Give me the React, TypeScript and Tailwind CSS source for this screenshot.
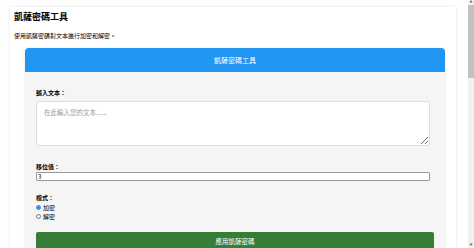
import React, { useState } from 'react';

const font = { fontFamily: '"Noto Sans CJK TC", "Noto Sans", sans-serif' };

export default function App() {
  const [mode, setMode] = useState('encrypt');
  const [shift, setShift] = useState('3');
  const [text, setText] = useState('');

  return (
    <div className="flex h-[248px] w-[474px] overflow-hidden bg-white text-black" style={font}>
      {/* page */}
      <div className="ml-[10px] mt-[7px] w-[446px] shrink-0 bg-white shadow-[0_0_3px_rgba(0,0,0,0.12)] px-[4px]">
        <h1 className="mt-[4px] text-[9px] font-bold leading-[12px]">凱薩密碼工具</h1>
        <p className="mt-[9px] text-[6px] leading-[8px]">使用凱薩密碼對文本進行加密和解密。</p>

        <div className="ml-[11px] mt-[8px] w-[420px] rounded-t-[4px] bg-[#f5f5f5] shadow-[0_0_2px_rgba(0,0,0,0.15)]">
          <div className="flex h-[24px] items-center justify-center rounded-t-[4px] bg-[#2196f3] text-[7px] text-white">
            凱薩密碼工具
          </div>
          <div className="px-[11px] pt-[17px] pb-[10px]">
            <label className="block text-[6px] font-bold leading-[8px]">輸入文本：</label>
            <textarea
              value={text}
              onChange={(e) => setText(e.target.value)}
              placeholder="在此輸入您的文本......"
              className="mt-[4px] block h-[45px] w-[394px] resize-y rounded-[3px] border border-[#dcdcdc] bg-white px-[7px] py-[6px] text-[6.5px] leading-[9px] outline-none placeholder:text-[#9a9a9a]"
            />

            <label className="mt-[17px] block text-[6px] font-bold leading-[8px]">移位值：</label>
            <input
              value={shift}
              onChange={(e) => setShift(e.target.value)}
              className="mt-[1px] block h-[9px] w-[394px] rounded-[1px] border border-[#9a9a9a] bg-white px-[1px] text-[6px] leading-[7px] outline-none"
            />

            <label className="mt-[13px] block text-[6px] font-bold leading-[8px]">模式：</label>
            <div className="mt-[1px] flex flex-col text-[6px] leading-[9px]">
              <label className="flex items-center gap-[2px]">
                <input
                  type="radio"
                  name="mode"
                  checked={mode === 'encrypt'}
                  onChange={() => setMode('encrypt')}
                  className="m-0 h-[5px] w-[5px] accent-[#2680eb]"
                />
                加密
              </label>
              <label className="flex items-center gap-[2px]">
                <input
                  type="radio"
                  name="mode"
                  checked={mode === 'decrypt'}
                  onChange={() => setMode('decrypt')}
                  className="m-0 h-[5px] w-[5px] accent-[#2680eb]"
                />
                解密
              </label>
            </div>

            <button className="mt-[11px] flex h-[18px] w-[398px] items-center justify-center rounded-[2px] bg-[#377d37] text-[6.5px] leading-[8px] text-white">
              應用凱薩密碼
            </button>
          </div>
        </div>
      </div>

      {/* scrollbar */}
      <div className="ml-auto flex h-full w-[6px] flex-col bg-[#f1f1f1]">
        <div className="h-[5px] text-center text-[3px] leading-[5px] text-[#666]">▲</div>
        <div className="h-[73px] bg-[#c1c1c1]" />
        <div className="flex-1" />
        <div className="h-[5px] text-center text-[3px] leading-[5px] text-[#666]">▼</div>
      </div>
    </div>
  );
}
